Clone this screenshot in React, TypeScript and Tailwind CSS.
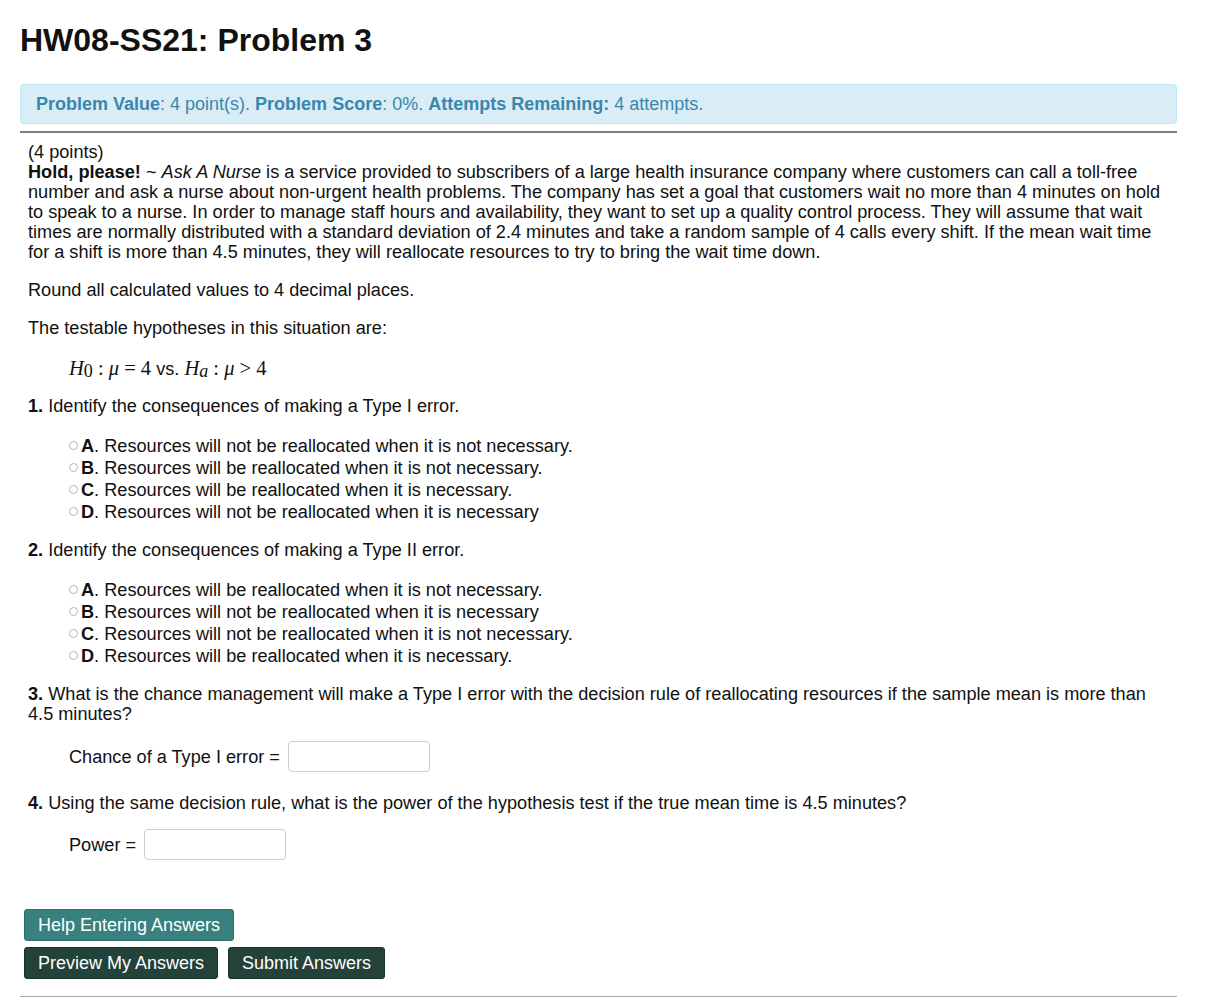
import React from "react";

const font = { fontFamily: '"Liberation Sans", Arial, Helvetica, sans-serif' };
const serif = { fontFamily: '"Liberation Serif", "Times New Roman", serif' };

function Radio() {
  return (
    <span className="inline-block w-[9px] h-[9px] rounded-full border border-[#b5b5b5] bg-white mr-[3px] relative top-[-1px] shrink-0" />
  );
}

function Choice({ letter, text }: { letter: string; text: string }) {
  return (
    <div className="flex items-center h-[22px]">
      <Radio />
      <span>
        <b>{letter}</b>. {text}
      </span>
    </div>
  );
}

export default function App() {
  return (
    <div className="bg-white text-[#111] min-h-[998px]" style={font}>
      <div className="ml-5 mr-[33px]">
        <h1 className="text-[32px] font-bold leading-none pt-[24px] pb-[28px]">HW08-SS21: Problem 3</h1>

        <div className="border border-[#bce8f1] bg-[#d9edf7] rounded-[4px] px-[15px] py-[9px] text-[18px] leading-[20px] text-[#3a87ad]">
          <b>Problem Value</b>: 4 point(s). <b>Problem Score</b>: 0%. <b>Attempts Remaining:</b> 4 attempts.
        </div>

        <div className="mt-[7px] border-t-2 border-[#808080]" />

        <div className="px-2 pt-[9px] text-[18.15px] leading-[20px]">
          <p>(4 points)</p>
          <p>
            <b>Hold, please!</b> ~ <i>Ask A Nurse</i> is a service provided to subscribers of a large health insurance company where customers can call a toll-free number and ask a nurse about non-urgent health problems. The company has set a goal that customers wait no more than 4 minutes on hold to speak to a nurse. In order to manage staff hours and availability, they want to set up a quality control process. They will assume that wait times are normally distributed with a standard deviation of 2.4 minutes and take a random sample of 4 calls every shift. If the mean wait time for a shift is more than 4.5 minutes, they will reallocate resources to try to bring the wait time down.
          </p>
          <p className="mt-[18px]">Round all calculated values to 4 decimal places.</p>
          <p className="mt-[18px]">The testable hypotheses in this situation are:</p>

          <p className="mt-[20px] pl-[41px]">
            <span className="text-[20.5px]" style={serif}>
              <i>H</i>
              <span className="relative top-[2px] text-[18px]">0</span> : <i>μ</i> = 4
            </span>{" "}
            vs.{" "}
            <span className="text-[20.5px]" style={serif}>
              <i>H</i>
              <span className="relative top-[2px] text-[18px] italic">a</span> : <i>μ</i> &gt; 4
            </span>
          </p>

          <p className="mt-[17px]">
            <b>1.</b> Identify the consequences of making a Type I error.
          </p>
          <div className="mt-[19px] pl-[41px]">
            <Choice letter="A" text="Resources will not be reallocated when it is not necessary." />
            <Choice letter="B" text="Resources will be reallocated when it is not necessary." />
            <Choice letter="C" text="Resources will be reallocated when it is necessary." />
            <Choice letter="D" text="Resources will not be reallocated when it is necessary" />
          </div>

          <p className="mt-[17px]">
            <b>2.</b> Identify the consequences of making a Type II error.
          </p>
          <div className="mt-[19px] pl-[41px]">
            <Choice letter="A" text="Resources will be reallocated when it is not necessary." />
            <Choice letter="B" text="Resources will not be reallocated when it is necessary" />
            <Choice letter="C" text="Resources will not be reallocated when it is not necessary." />
            <Choice letter="D" text="Resources will be reallocated when it is necessary." />
          </div>

          <p className="mt-[17px]">
            <b>3.</b> What is the chance management will make a Type I error with the decision rule of reallocating resources if the sample mean is more than 4.5 minutes?
          </p>
          <div className="mt-[17px] pl-[41px] flex items-center gap-[8px]">
            <span>Chance of a Type I error =</span>
            <input className="w-[142px] h-[31px] border border-[#ccc] rounded-[4px] bg-white" />
          </div>

          <p className="mt-[21px]">
            <b>4.</b> Using the same decision rule, what is the power of the hypothesis test if the true mean time is 4.5 minutes?
          </p>
          <div className="mt-[16px] pl-[41px] flex items-center gap-[8px]">
            <span>Power =</span>
            <input className="w-[142px] h-[31px] border border-[#ccc] rounded-[4px] bg-white" />
          </div>
        </div>

        <div className="mt-[49px] pl-1">
          <button className="h-[32px] px-[13px] rounded-[3px] bg-[#38817f] border border-[#2f6f6d] text-white text-[18px] leading-none">
            Help Entering Answers
          </button>
          <div className="mt-[6px] flex gap-[10px]">
            <button className="h-[32px] px-[13px] rounded-[3px] bg-[#23423a] border border-[#1a322c] text-white text-[18px] leading-none">
              Preview My Answers
            </button>
            <button className="h-[32px] px-[13px] rounded-[3px] bg-[#23423a] border border-[#1a322c] text-white text-[18px] leading-none">
              Submit Answers
            </button>
          </div>
        </div>

        <div className="mt-[17px] border-t border-[#aaa]" />
      </div>
    </div>
  );
}
